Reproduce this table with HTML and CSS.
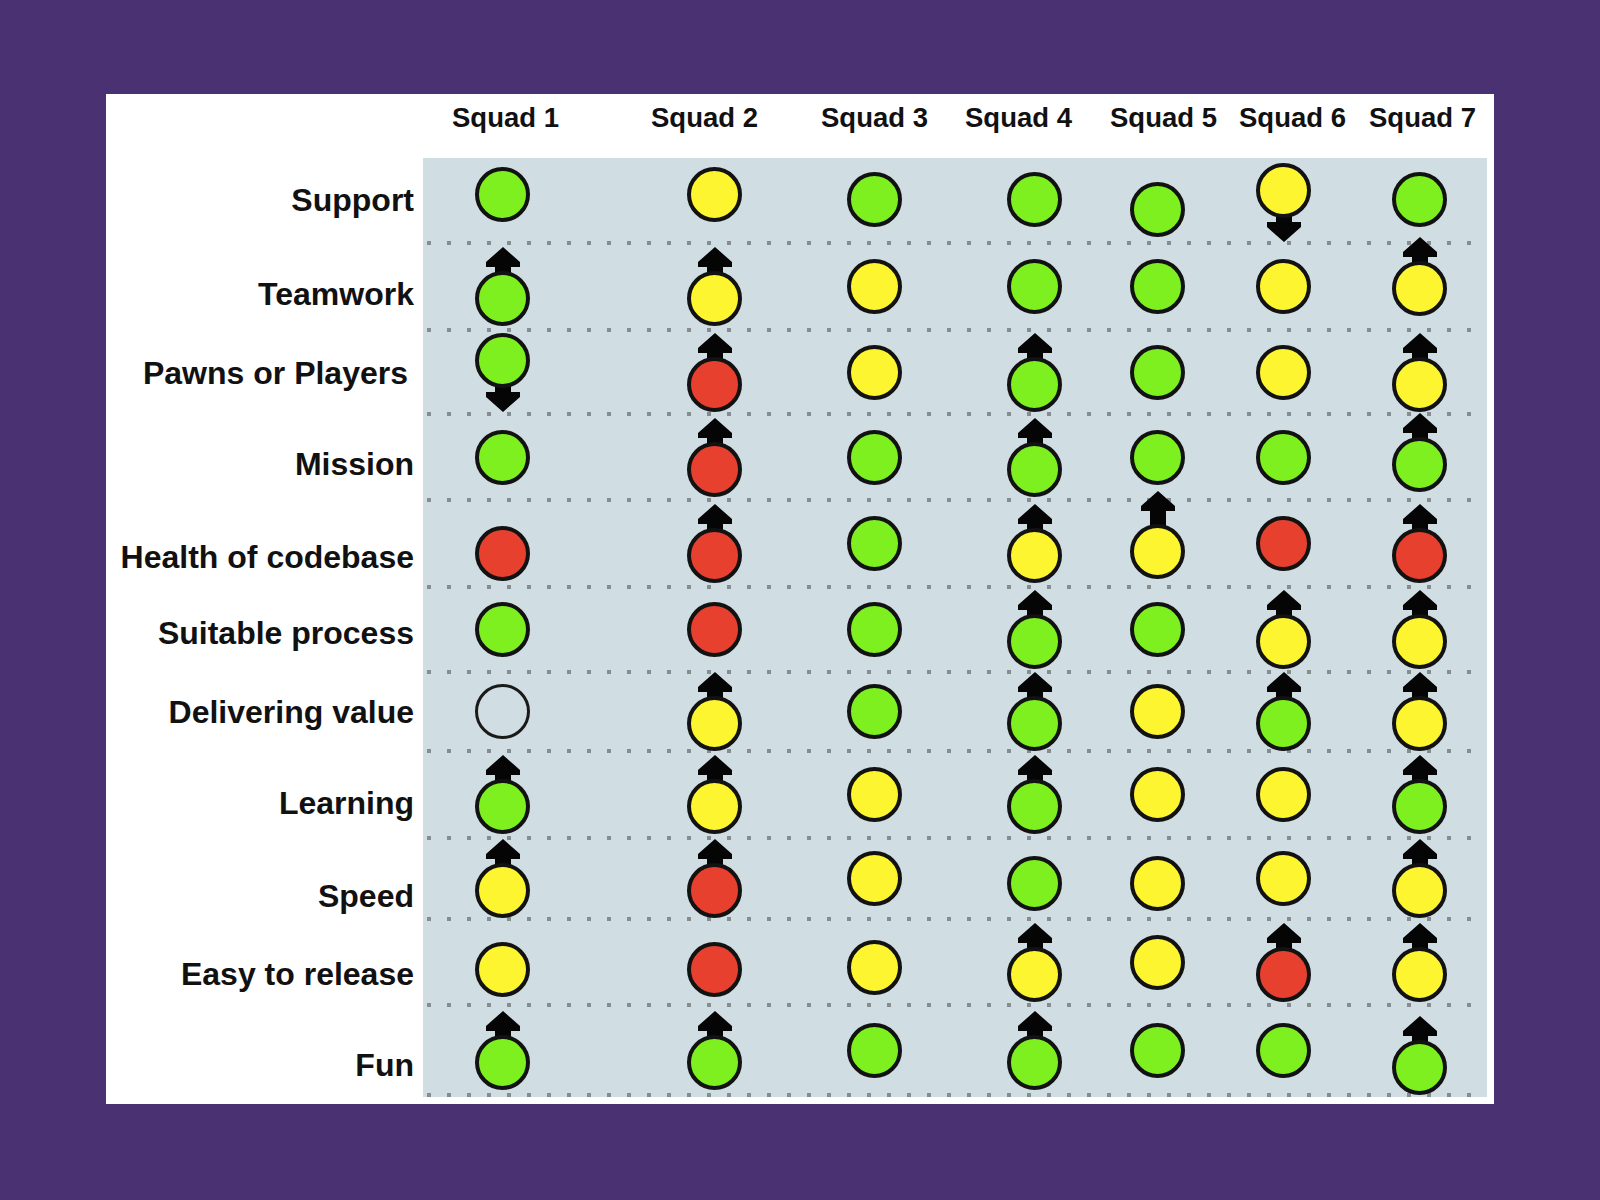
FILE: index.html
```html
<!DOCTYPE html>
<html lang="en">
<head>
<meta charset="utf-8">
<title>Squad health check</title>
<link rel="stylesheet" href="styles.css">
</head>
<body>
<svg class="defs" aria-hidden="true">
  <symbol id="up" viewBox="0 0 36 26"><path d="M18 0 L35 15 L35 20 L26 20 L26 26 L10 26 L10 20 L1 20 L1 15 Z"/></symbol>
  <symbol id="down" viewBox="0 0 36 26"><path d="M18 26 L35 11 L35 6 L26 6 L26 0 L10 0 L10 6 L1 6 L1 11 Z"/></symbol>
  <symbol id="uplong" viewBox="0 0 36 35"><path d="M18 0 L35 15 L35 20 L26 20 L26 35 L10 35 L10 20 L1 20 L1 15 Z"/></symbol>
</svg>
<div class="page">
  <div class="card">
    <div class="head">
      <div class="corner"></div>
      <div class="squads">
        <span>Squad 1</span><span>Squad 2</span><span>Squad 3</span><span>Squad 4</span><span>Squad 5</span><span>Squad 6</span><span>Squad 7</span>
      </div>
    </div>
    <div class="rows">
      <!-- Support -->
      <div class="row">
        <div class="label">Support</div>
        <div class="cells">
          <div class="mk lift-5"><i class="dot g"></i></div>
          <div class="mk lift-5"><i class="dot y"></i></div>
          <div class="mk"><i class="dot g"></i></div>
          <div class="mk"><i class="dot g"></i></div>
          <div class="mk drop-10"><i class="dot g"></i></div>
          <div class="mk drop-3"><i class="dot y"></i><svg class="arr down"><use href="#down"/></svg></div>
          <div class="mk"><i class="dot g"></i></div>
        </div>
      </div>
      <!-- Teamwork -->
      <div class="row">
        <div class="label">Teamwork</div>
        <div class="cells">
          <div class="mk"><svg class="arr up"><use href="#up"/></svg><i class="dot g"></i></div>
          <div class="mk"><svg class="arr up"><use href="#up"/></svg><i class="dot y"></i></div>
          <div class="mk"><i class="dot y"></i></div>
          <div class="mk"><i class="dot g"></i></div>
          <div class="mk"><i class="dot g"></i></div>
          <div class="mk"><i class="dot y"></i></div>
          <div class="mk lift-10"><svg class="arr up"><use href="#up"/></svg><i class="dot y"></i></div>
        </div>
      </div>
      <!-- Pawns or Players -->
      <div class="row">
        <div class="label inset">Pawns or Players</div>
        <div class="cells">
          <div class="mk"><i class="dot g"></i><svg class="arr down"><use href="#down"/></svg></div>
          <div class="mk"><svg class="arr up"><use href="#up"/></svg><i class="dot r"></i></div>
          <div class="mk"><i class="dot y"></i></div>
          <div class="mk"><svg class="arr up"><use href="#up"/></svg><i class="dot g"></i></div>
          <div class="mk"><i class="dot g"></i></div>
          <div class="mk"><i class="dot y"></i></div>
          <div class="mk"><svg class="arr up"><use href="#up"/></svg><i class="dot y"></i></div>
        </div>
      </div>
      <!-- Mission -->
      <div class="row">
        <div class="label">Mission</div>
        <div class="cells">
          <div class="mk"><i class="dot g"></i></div>
          <div class="mk"><svg class="arr up"><use href="#up"/></svg><i class="dot r"></i></div>
          <div class="mk"><i class="dot g"></i></div>
          <div class="mk"><svg class="arr up"><use href="#up"/></svg><i class="dot g"></i></div>
          <div class="mk"><i class="dot g"></i></div>
          <div class="mk"><i class="dot g"></i></div>
          <div class="mk lift-5"><svg class="arr up"><use href="#up"/></svg><i class="dot g"></i></div>
        </div>
      </div>
      <!-- Health of codebase -->
      <div class="row">
        <div class="label">Health of codebase</div>
        <div class="cells">
          <div class="mk drop-10"><i class="dot r"></i></div>
          <div class="mk"><svg class="arr up"><use href="#up"/></svg><i class="dot r"></i></div>
          <div class="mk"><i class="dot g"></i></div>
          <div class="mk"><svg class="arr up"><use href="#up"/></svg><i class="dot y"></i></div>
          <div class="mk lift-9"><svg class="arr up long"><use href="#uplong"/></svg><i class="dot y"></i></div>
          <div class="mk"><i class="dot r"></i></div>
          <div class="mk"><svg class="arr up"><use href="#up"/></svg><i class="dot r"></i></div>
        </div>
      </div>
      <!-- Suitable process -->
      <div class="row">
        <div class="label">Suitable process</div>
        <div class="cells">
          <div class="mk"><i class="dot g"></i></div>
          <div class="mk"><i class="dot r"></i></div>
          <div class="mk"><i class="dot g"></i></div>
          <div class="mk"><svg class="arr up"><use href="#up"/></svg><i class="dot g"></i></div>
          <div class="mk"><i class="dot g"></i></div>
          <div class="mk"><svg class="arr up"><use href="#up"/></svg><i class="dot y"></i></div>
          <div class="mk"><svg class="arr up"><use href="#up"/></svg><i class="dot y"></i></div>
        </div>
      </div>
      <!-- Delivering value -->
      <div class="row">
        <div class="label">Delivering value</div>
        <div class="cells">
          <div class="mk"><i class="dot o"></i></div>
          <div class="mk"><svg class="arr up"><use href="#up"/></svg><i class="dot y"></i></div>
          <div class="mk"><i class="dot g"></i></div>
          <div class="mk"><svg class="arr up"><use href="#up"/></svg><i class="dot g"></i></div>
          <div class="mk"><i class="dot y"></i></div>
          <div class="mk"><svg class="arr up"><use href="#up"/></svg><i class="dot g"></i></div>
          <div class="mk"><svg class="arr up"><use href="#up"/></svg><i class="dot y"></i></div>
        </div>
      </div>
      <!-- Learning -->
      <div class="row">
        <div class="label">Learning</div>
        <div class="cells">
          <div class="mk"><svg class="arr up"><use href="#up"/></svg><i class="dot g"></i></div>
          <div class="mk"><svg class="arr up"><use href="#up"/></svg><i class="dot y"></i></div>
          <div class="mk"><i class="dot y"></i></div>
          <div class="mk"><svg class="arr up"><use href="#up"/></svg><i class="dot g"></i></div>
          <div class="mk"><i class="dot y"></i></div>
          <div class="mk"><i class="dot y"></i></div>
          <div class="mk"><svg class="arr up"><use href="#up"/></svg><i class="dot g"></i></div>
        </div>
      </div>
      <!-- Speed -->
      <div class="row">
        <div class="label">Speed</div>
        <div class="cells">
          <div class="mk"><svg class="arr up"><use href="#up"/></svg><i class="dot y"></i></div>
          <div class="mk"><svg class="arr up"><use href="#up"/></svg><i class="dot r"></i></div>
          <div class="mk"><i class="dot y"></i></div>
          <div class="mk drop-5"><i class="dot g"></i></div>
          <div class="mk drop-5"><i class="dot y"></i></div>
          <div class="mk"><i class="dot y"></i></div>
          <div class="mk"><svg class="arr up"><use href="#up"/></svg><i class="dot y"></i></div>
        </div>
      </div>
      <!-- Easy to release -->
      <div class="row">
        <div class="label">Easy to release</div>
        <div class="cells">
          <div class="mk drop-7"><i class="dot y"></i></div>
          <div class="mk drop-7"><i class="dot r"></i></div>
          <div class="mk drop-5"><i class="dot y"></i></div>
          <div class="mk"><svg class="arr up"><use href="#up"/></svg><i class="dot y"></i></div>
          <div class="mk"><i class="dot y"></i></div>
          <div class="mk"><svg class="arr up"><use href="#up"/></svg><i class="dot r"></i></div>
          <div class="mk"><svg class="arr up"><use href="#up"/></svg><i class="dot y"></i></div>
        </div>
      </div>
      <!-- Fun -->
      <div class="row">
        <div class="label">Fun</div>
        <div class="cells">
          <div class="mk"><svg class="arr up"><use href="#up"/></svg><i class="dot g"></i></div>
          <div class="mk"><svg class="arr up"><use href="#up"/></svg><i class="dot g"></i></div>
          <div class="mk"><i class="dot g"></i></div>
          <div class="mk"><svg class="arr up"><use href="#up"/></svg><i class="dot g"></i></div>
          <div class="mk"><i class="dot g"></i></div>
          <div class="mk"><i class="dot g"></i></div>
          <div class="mk drop-5"><svg class="arr up"><use href="#up"/></svg><i class="dot g"></i></div>
        </div>
      </div>
    </div>
  </div>
</div>
</body>
</html>
```

FILE: styles.css
```css
html, body {
  margin: 0;
  padding: 0;
}

body {
  background: #4a3172;
  width: 1600px;
  height: 1200px;
  font-family: "Liberation Sans", Arial, sans-serif;
  color: #111;
}

.defs {
  position: absolute;
  width: 0;
  height: 0;
  overflow: hidden;
}

.page {
  padding: 94px 0 0 106px;
}

.card {
  width: 1388px;
  height: 1010px;
  background: #fff;
  display: flex;
  flex-direction: column;
}

.head {
  height: 64px;
  flex: none;
  display: grid;
  grid-template-columns: 317px 1064px;
}

.squads {
  display: grid;
  grid-template-columns: 199px 170px 144px 145px 129px 130px auto;
  padding: 10px 0 0 29px;
  font-weight: 700;
  font-size: 27.5px;
  line-height: 28px;
  white-space: nowrap;
}

.rows {
  display: grid;
  grid-template-rows: 87px 87px 84px 86px 87px 85px 79px 87px 81px 86px 90px;
}

.row {
  display: grid;
  grid-template-columns: 317px 1064px;
  grid-template-rows: minmax(0, 1fr);
  min-height: 0;
}

.label {
  align-self: start;
  text-align: right;
  padding-right: 9px;
  font-weight: 700;
  font-size: 32px;
  line-height: 32px;
  white-space: nowrap;
}

.label.inset {
  padding-right: 15px;
}

.row:nth-child(1) .label { padding-top: 26px; }
.row:nth-child(2) .label { padding-top: 33px; }
.row:nth-child(3) .label { padding-top: 25px; }
.row:nth-child(4) .label { padding-top: 32px; }
.row:nth-child(5) .label { padding-top: 39px; }
.row:nth-child(6) .label { padding-top: 28px; }
.row:nth-child(7) .label { padding-top: 22px; }
.row:nth-child(8) .label { padding-top: 34px; }
.row:nth-child(9) .label { padding-top: 40px; }
.row:nth-child(10) .label { padding-top: 37px; }
.row:nth-child(11) .label { padding-top: 42px; }

.cells {
  min-height: 0;
  display: grid;
  grid-template-columns: 212px 160px 160px 123px 126px 136px 1fr;
  grid-template-rows: minmax(0, 1fr);
  align-items: center;
  justify-items: start;
  padding: 0 0 4px 52px;
  background-color: #d0dde2;
  background-image: linear-gradient(90deg, #858d90 4px, transparent 4px);
  background-size: 20px 4px;
  background-repeat: repeat-x;
  background-position: 4px 100%;
}

.mk {
  width: 55px;
  display: flex;
  flex-direction: column;
  align-items: center;
}

.mk.lift-5 { margin-bottom: 10px; }
.mk.lift-9 { margin-bottom: 18px; }
.mk.lift-10 { margin-bottom: 20px; }
.mk.drop-3 { margin-top: 6px; }
.mk.drop-5 { margin-top: 10px; }
.mk.drop-7 { margin-top: 14px; }
.mk.drop-10 { margin-top: 20px; }

.arr {
  display: block;
  width: 36px;
  height: 26px;
  fill: #050505;
  flex: none;
}

.arr.up { margin-bottom: -2px; }
.arr.down { margin-top: -2px; }
.arr.long { height: 35px; }

.dot {
  display: block;
  flex: none;
  width: 55px;
  height: 55px;
  box-sizing: border-box;
  border-radius: 50%;
  border: 4px solid #121212;
  position: relative;
}

.dot.g { background: #7ef01f; }
.dot.y { background: #fdf530; }
.dot.r { background: #e8402f; }
.dot.o { background: transparent; border-width: 3px; border-color: #1a1a1a; }
```
